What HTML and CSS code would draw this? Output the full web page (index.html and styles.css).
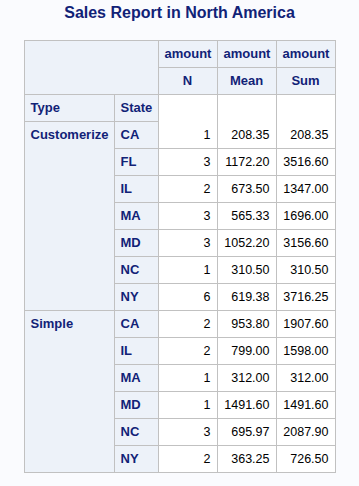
FILE: index.html
```html
<!DOCTYPE html>
<html>
<head>
<meta charset="utf-8">
<link rel="stylesheet" href="styles.css">
</head>
<body>
<div class="title">Sales Report in North America</div>
<table class="report">
  <colgroup>
    <col class="c-type"><col class="c-state"><col class="c-num"><col class="c-num"><col class="c-num">
  </colgroup>
  <thead>
    <tr>
      <th class="hd" colspan="2" rowspan="2"></th>
      <th class="hd">amount</th>
      <th class="hd">amount</th>
      <th class="hd">amount</th>
    </tr>
    <tr>
      <th class="hd">N</th>
      <th class="hd">Mean</th>
      <th class="hd">Sum</th>
    </tr>
  </thead>
  <tbody>
    <tr>
      <th class="rh">Type</th>
      <th class="rh">State</th>
      <td class="num first" rowspan="2">1</td>
      <td class="num first" rowspan="2">208.35</td>
      <td class="num first" rowspan="2">208.35</td>
    </tr>
    <tr><th class="rh grp" rowspan="7">Customerize</th><th class="rh">CA</th></tr>
    <tr><th class="rh">FL</th><td class="num">3</td><td class="num">1172.20</td><td class="num">3516.60</td></tr>
    <tr><th class="rh">IL</th><td class="num">2</td><td class="num">673.50</td><td class="num">1347.00</td></tr>
    <tr><th class="rh">MA</th><td class="num">3</td><td class="num">565.33</td><td class="num">1696.00</td></tr>
    <tr><th class="rh">MD</th><td class="num">3</td><td class="num">1052.20</td><td class="num">3156.60</td></tr>
    <tr><th class="rh">NC</th><td class="num">1</td><td class="num">310.50</td><td class="num">310.50</td></tr>
    <tr><th class="rh">NY</th><td class="num">6</td><td class="num">619.38</td><td class="num">3716.25</td></tr>
    <tr><th class="rh grp" rowspan="6">Simple</th><th class="rh">CA</th><td class="num">2</td><td class="num">953.80</td><td class="num">1907.60</td></tr>
    <tr><th class="rh">IL</th><td class="num">2</td><td class="num">799.00</td><td class="num">1598.00</td></tr>
    <tr><th class="rh">MA</th><td class="num">1</td><td class="num">312.00</td><td class="num">312.00</td></tr>
    <tr><th class="rh">MD</th><td class="num">1</td><td class="num">1491.60</td><td class="num">1491.60</td></tr>
    <tr><th class="rh">NC</th><td class="num">3</td><td class="num">695.97</td><td class="num">2087.90</td></tr>
    <tr><th class="rh">NY</th><td class="num">2</td><td class="num">363.25</td><td class="num">726.50</td></tr>
  </tbody>
</table>
</body>
</html>
```
FILE: styles.css
```css
html, body {
  margin: 0;
  padding: 0;
  background: #fafbfe;
  font-family: "Liberation Sans", Arial, sans-serif;
}
.title {
  padding-top: 4px;
  line-height: 18px;
  height: 18px;
  text-align: center;
  font-size: 16px;
  font-weight: bold;
  color: #112277;
  margin-bottom: 18px;
}
.report {
  margin: 0 auto;
  border-collapse: collapse;
  table-layout: fixed;
  width: 312px;
  border: 1px solid #c1c1c1;
}
.c-type { width: 90px; }
.c-state { width: 44px; }
.c-num { width: 59px; }
.report th, .report td {
  border: 1px solid #c1c1c1;
  padding: 5px 6px;
  line-height: 16px;
  height: 16px;
}
.report th {
  background: #edf2f9;
  color: #112277;
  font-size: 13px;
  font-weight: bold;
}
.hd { text-align: center; }
.rh { text-align: left; }
.grp { vertical-align: top; }
.num {
  background: #ffffff;
  color: #000000;
  font-size: 12.5px;
  text-align: right;
  white-space: nowrap;
}
.first { vertical-align: bottom; }
```
